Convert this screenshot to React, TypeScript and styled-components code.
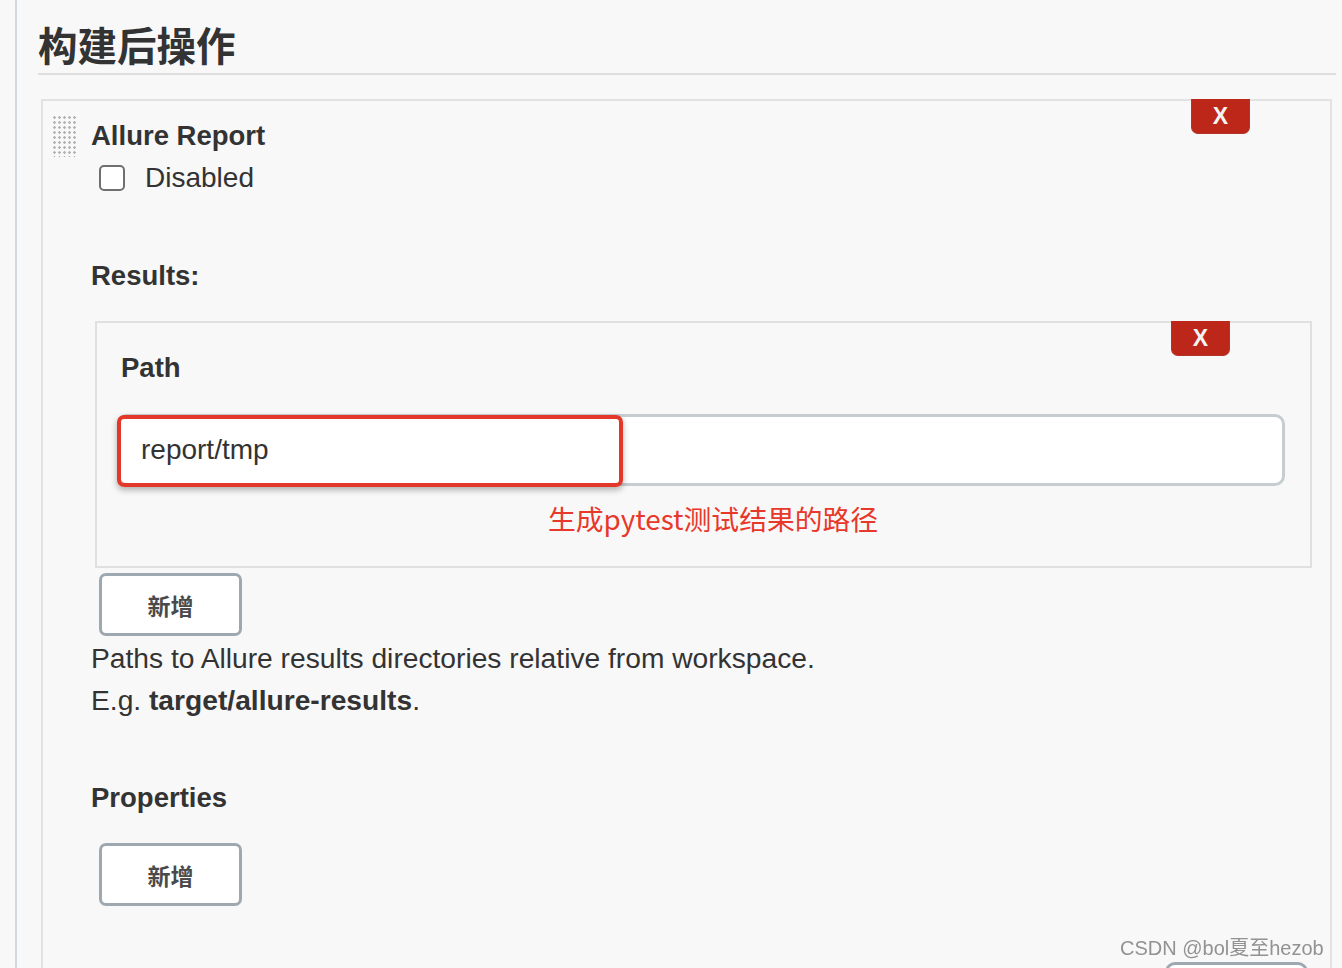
import { FunctionComponent } from "react";
import styled, { createGlobalStyle } from "styled-components";

const GlobalStyle = createGlobalStyle`
  html, body {
    margin: 0;
    background: #f8f8f8;
  }
  body {
    font-family: "Liberation Sans", "Noto Sans CJK SC", sans-serif;
    color: #333333;
  }
`;

const Page = styled.div`
  height: 968px;
  margin-left: 15px;
  border-left: 2px solid #d3d8dc;
  padding: 18px 6px 0 21px;
  box-sizing: border-box;
  overflow: hidden;
`;

const SectionTitle = styled.h2`
  margin: 0;
  padding-bottom: 3px;
  border-bottom: 2px solid #dedede;
  font-family: "Noto Sans CJK SC", sans-serif;
  font-size: 39.5px;
  line-height: 52px;
  font-weight: 700;
  color: #333333;
`;

const StepPanel = styled.div`
  position: relative;
  display: flex;
  align-items: flex-start;
  gap: 15px;
  width: 1291px;
  margin: 24px 0 0 3px;
  padding: 14px 0 0 9px;
  border: 2px solid #e2e2e2;
  box-sizing: border-box;
`;

const DragHandle = styled.div`
  flex-shrink: 0;
  width: 24px;
  height: 42px;
  background-image: radial-gradient(circle, #b3b3b3 1.1px, transparent 1.5px);
  background-size: 5px 5px;
`;

const PanelBody = styled.div`
  flex: 1;
  display: flex;
  flex-direction: column;
  align-items: flex-start;
`;

const DeleteButton = styled.button`
  position: absolute;
  top: -2px;
  right: 80px;
  width: 59px;
  height: 35px;
  padding: 0;
  border: 1px solid #b0352a;
  border-top: none;
  border-radius: 0 0 7px 7px;
  background: #bd2719;
  color: #f4f4f4;
  font-family: "Liberation Sans", sans-serif;
  font-size: 23px;
  font-weight: 700;
  line-height: 33px;
`;

const PanelTitle = styled.div`
  font-size: 27.5px;
  line-height: 42px;
  font-weight: 700;
`;

const CheckRow = styled.label`
  display: flex;
  align-items: center;
  gap: 20px;
  padding-left: 8px;
  font-size: 28px;
  line-height: 42px;
`;

const CheckBox = styled.span`
  width: 26px;
  height: 26px;
  border: 2px solid #6f6f6f;
  border-radius: 5px;
  background: #ffffff;
  box-sizing: border-box;
`;

const FieldLabel = styled.div<{ $gap: number }>`
  margin-top: ${(p) => p.$gap}px;
  font-size: 27.5px;
  line-height: 42px;
  font-weight: 700;
`;

const RepeatedBlock = styled.div`
  position: relative;
  width: 1217px;
  margin: 24px 0 0 4px;
  padding: 24px 0 28px 0;
  border: 2px solid #e0e0e0;
  box-sizing: border-box;
`;

const BlockLabel = styled.div`
  margin-left: 24px;
  font-size: 27.5px;
  line-height: 42px;
  font-weight: 700;
`;

const InputWrap = styled.div`
  position: relative;
  width: 1168px;
  margin: 25px 0 0 20px;
`;

const TextInput = styled.div`
  height: 72px;
  padding-left: 21px;
  border: 3px solid #c6cdd1;
  border-radius: 10px;
  background: #ffffff;
  box-sizing: border-box;
  font-size: 28px;
  line-height: 66px;
  color: #333333;
`;

const Highlight = styled.div`
  position: absolute;
  top: 1px;
  left: 0;
  width: 506px;
  height: 72px;
  border: 4px solid #e3372a;
  border-radius: 7px;
  box-sizing: border-box;
  box-shadow: 0 3px 6px rgba(0, 0, 0, 0.3);
`;

const Note = styled.div`
  margin: 12px 0 0 451px;
  font-family: "Noto Sans CJK SC", sans-serif;
  font-size: 27.8px;
  line-height: 40px;
  color: #e8382a;
`;

const AddButton = styled.button<{ $top: number }>`
  width: 143px;
  height: 63px;
  margin: ${(p) => p.$top}px 0 0 8px;
  border: 3px solid #9ea8b0;
  border-radius: 7px;
  background: #ffffff;
  font-family: "Noto Sans CJK SC", sans-serif;
  font-size: 23px;
  font-weight: 700;
  color: #4a4a4a;
`;

const HelpText = styled.div`
  margin-top: 1px;
  font-size: 28.2px;
  line-height: 42px;

  b {
    font-weight: 700;
  }
`;

const Footer = styled.div`
  align-self: stretch;
  display: flex;
  justify-content: flex-end;
  padding-right: 22px;
  margin-top: 56px;
`;

const FooterButton = styled.div`
  width: 143px;
  height: 63px;
  border: 3px solid #9ea8b0;
  border-radius: 10px;
  background: #ffffff;
  box-sizing: border-box;
`;

const Watermark = styled.div`
  position: fixed;
  left: 1120px;
  top: 936px;
  font-family: "Liberation Sans", "Noto Sans CJK SC", sans-serif;
  font-size: 20px;
  line-height: 24px;
  color: rgba(120, 120, 120, 0.8);
  white-space: nowrap;
`;

const App: FunctionComponent = () => {
  return (
    <>
      <GlobalStyle />
      <Page>
        <SectionTitle>构建后操作</SectionTitle>
        <StepPanel>
          <DragHandle />
          <DeleteButton>X</DeleteButton>
          <PanelBody>
            <PanelTitle>Allure Report</PanelTitle>
            <CheckRow>
              <CheckBox />
              Disabled
            </CheckRow>
            <FieldLabel $gap={56}>Results:</FieldLabel>
            <RepeatedBlock>
              <DeleteButton>X</DeleteButton>
              <BlockLabel>Path</BlockLabel>
              <InputWrap>
                <TextInput>report/tmp</TextInput>
                <Highlight />
              </InputWrap>
              <Note>生成pytest测试结果的路径</Note>
            </RepeatedBlock>
            <AddButton $top={5}>新增</AddButton>
            <HelpText>
              Paths to Allure results directories relative from workspace.
              <br />
              E.g. <b>target/allure-results</b>.
            </HelpText>
            <FieldLabel $gap={56}>Properties</FieldLabel>
            <AddButton $top={24}>新增</AddButton>
            <Footer>
              <FooterButton />
            </Footer>
          </PanelBody>
        </StepPanel>
      </Page>
      <Watermark>CSDN @bol夏至hezob</Watermark>
    </>
  );
};

export default App;
